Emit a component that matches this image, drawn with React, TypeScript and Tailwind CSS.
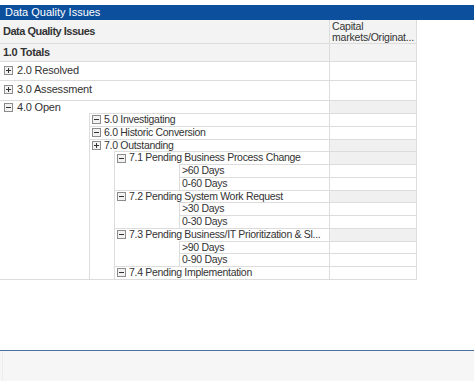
import React from 'react';

const Toggle = ({ open }: { open: boolean }) => (
  <svg width="9" height="9" viewBox="0 0 9 9" className="shrink-0">
    <rect x="0.5" y="0.5" width="8" height="8" fill="#f2f2f2" stroke="#8c8c8c" />
    <line x1="2" y1="4.5" x2="7" y2="4.5" stroke="#333" />
    {!open && <line x1="4.5" y1="2" x2="4.5" y2="7" stroke="#333" />}
  </svg>
);

type Row = {
  label: string;
  indent: number[]; // widths of empty tree cells before the label
  toggle?: 'open' | 'closed';
  gray?: boolean;
};

const rows: Row[] = [
  { label: '5.0 Investigating', indent: [90], toggle: 'open' },
  { label: '6.0 Historic Conversion', indent: [90], toggle: 'open' },
  { label: '7.0 Outstanding', indent: [90], toggle: 'closed', gray: true },
  { label: '7.1 Pending Business Process Change', indent: [90, 25], toggle: 'open', gray: true },
  { label: '>60 Days', indent: [90, 25, 65] },
  { label: '0-60 Days', indent: [90, 25, 65] },
  { label: '7.2 Pending System Work Request', indent: [90, 25], toggle: 'open', gray: true },
  { label: '>30 Days', indent: [90, 25, 65] },
  { label: '0-30 Days', indent: [90, 25, 65] },
  { label: '7.3 Pending Business/IT Prioritization & Sl...', indent: [90, 25], toggle: 'open', gray: true },
  { label: '>90 Days', indent: [90, 25, 65] },
  { label: '0-90 Days', indent: [90, 25, 65] },
  { label: '7.4 Pending Implementation', indent: [90, 25], toggle: 'open' },
];

const indentClass: Record<number, string> = {
  90: 'w-[90px]',
  25: 'w-[25px]',
  65: 'w-[65px]',
};

export default function App() {
  return (
    <div
      className="flex h-[381px] w-[474px] flex-col overflow-hidden bg-white text-[11px] text-[#333]"
      style={{ fontFamily: '"Liberation Sans", Arial, sans-serif' }}
    >
      <div className="mt-[5px] flex h-[15px] items-center bg-[#0c4f9d] pl-[5px] text-white">
        Data Quality Issues
      </div>

      <div className="w-[417px] border-b border-[#dcdcdc]">
        {/* header */}
        <div className="flex h-[23px] bg-[#f3f3f3]">
          <div className="flex w-[329px] items-center pl-[3px] font-bold tracking-[-0.5px]">
            Data Quality Issues
          </div>
          <div className="w-[88px] border-x border-[#dcdcdc] pl-[2px] pt-[1px] text-[10.5px] leading-[11px] tracking-[-0.2px]">
            Capital
            <br />
            markets/Originat...
          </div>
        </div>

        <div className="flex h-[18px] border-t border-[#dcdcdc] bg-[#f3f3f3]">
          <div className="flex w-[329px] items-center pl-[3px] font-bold tracking-[-0.3px]">1.0 Totals</div>
          <div className="w-[88px] border-x border-[#dcdcdc]" />
        </div>

        <div className="flex h-[19px] border-t border-[#dcdcdc]">
          <div className="flex w-[329px] items-center gap-[4px] pb-[2px] pl-[4px] tracking-[-0.2px]">
            <Toggle open={false} />
            2.0 Resolved
          </div>
          <div className="w-[88px] border-x border-[#dcdcdc]" />
        </div>

        <div className="flex h-[20px] border-t border-[#dcdcdc]">
          <div className="flex w-[329px] items-center gap-[4px] pb-[2px] pl-[4px] tracking-[-0.2px]">
            <Toggle open={false} />
            3.0 Assessment
          </div>
          <div className="w-[88px] border-x border-[#dcdcdc]" />
        </div>

        <div className="flex h-[13px] border-t border-[#dcdcdc]">
          <div className="flex w-[329px] items-center gap-[4px] pl-[4px] tracking-[-0.2px]">
            <Toggle open={true} />
            4.0 Open
          </div>
          <div className="w-[88px] border-x border-[#dcdcdc] bg-[#f0f0f0]" />
        </div>

        {rows.map((r, i) => (
          <div key={i} className="flex h-[12.75px]">
            {r.indent.map((w, j) => (
              <div key={j} className={`${indentClass[w]} shrink-0 border-r border-[#dcdcdc]`} />
            ))}
            <div className="flex min-w-0 flex-1 items-center gap-[3px] overflow-hidden whitespace-nowrap border-t border-[#dcdcdc] pl-[2px] text-[10.5px] tracking-[-0.3px]">
              {r.toggle && <Toggle open={r.toggle === 'open'} />}
              {r.label}
            </div>
            <div
              className={`w-[88px] shrink-0 border-x border-t border-[#dcdcdc] ${r.gray ? 'bg-[#f0f0f0]' : ''}`}
            />
          </div>
        ))}
      </div>

      <div className="flex-1" />

      <div className="h-[31px] border-t border-[#4a6fa3] bg-[#f6f6f6] pl-[2px]">
        <div className="h-full border-l border-[#ececec]" />
      </div>
    </div>
  );
}
